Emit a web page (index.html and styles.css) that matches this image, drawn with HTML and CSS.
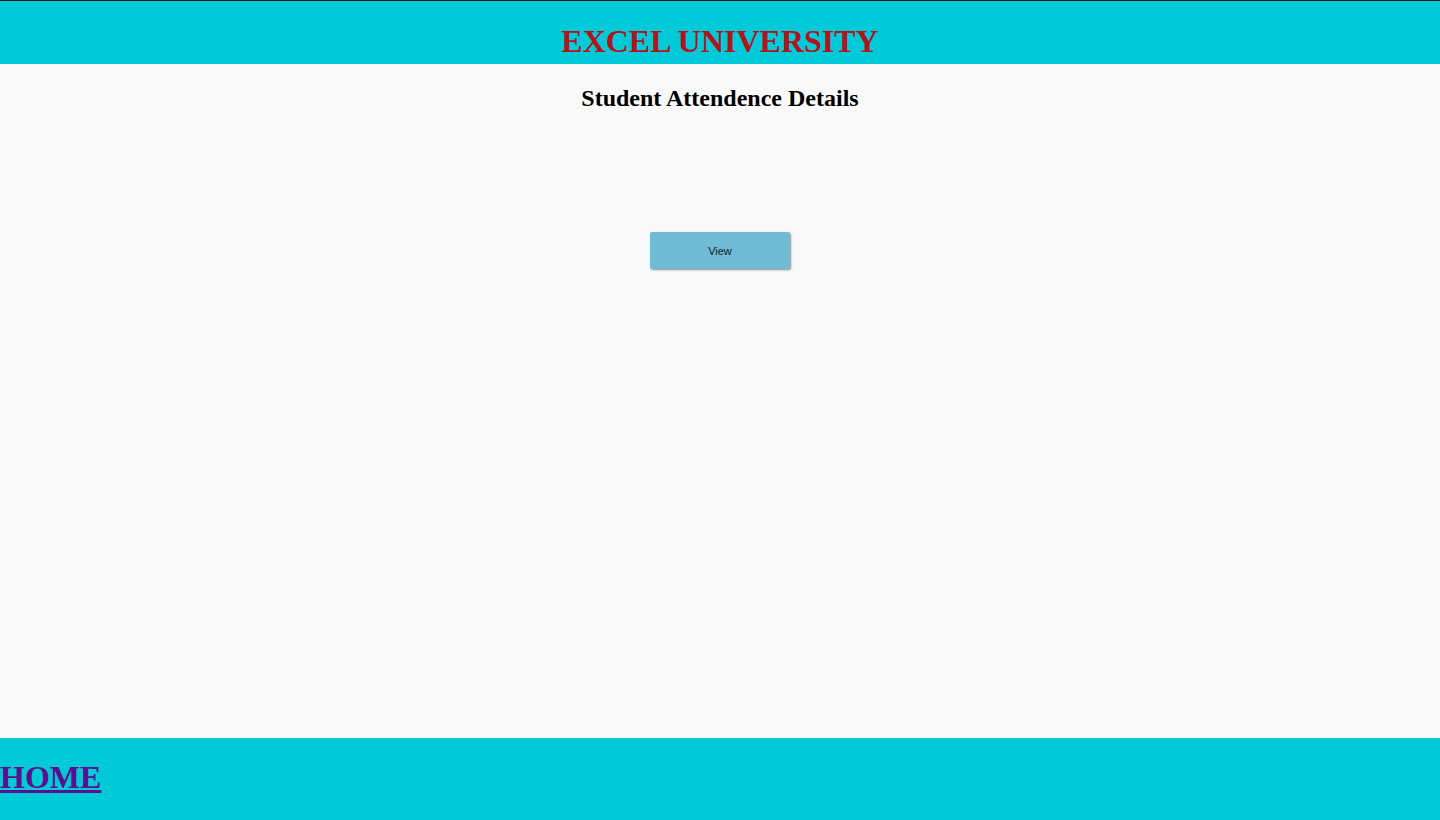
FILE: index.html
```html
<!DOCTYPE html>
<html lang="en">
<head>
<meta charset="utf-8">
<title>Excel University</title>
<link rel="stylesheet" href="styles.css">
</head>
<body>
<div class="page">
  <header class="site-header">
    <h1 class="brand">EXCEL UNIVERSITY</h1>
  </header>
  <main class="content">
    <h2 class="page-title">Student Attendence Details</h2>
    <div class="actions">
      <button class="view-btn" type="button">View</button>
    </div>
  </main>
  <footer class="site-footer">
    <h1 class="home"><a class="home-link" href="#">HOME</a></h1>
  </footer>
</div>
</body>
</html>
```

FILE: styles.css
```css
html, body {
  margin: 0;
  padding: 0;
}
body {
  background: #f9f9f9;
  font-family: "Liberation Serif", "Times New Roman", serif;
}
.page {
  display: flex;
  flex-direction: column;
  min-height: 820px;
}
.site-header {
  background: #00cad8;
  border-top: 1px solid #1a1a1a;
  height: 63px;
}
.brand {
  margin: 0;
  padding-top: 22px;
  text-align: center;
  font-size: 32px;
  font-weight: bold;
  color: #b3141c;
  line-height: normal;
}
.content {
  flex: 1;
}
.page-title {
  margin: 21px 0 0;
  text-align: center;
  font-size: 24px;
  font-weight: bold;
  color: #000;
}
.actions {
  display: flex;
  justify-content: center;
  margin-top: 120px;
}
.view-btn {
  width: 140px;
  height: 37px;
  background: #70bcd4;
  border: none;
  border-radius: 2px;
  box-shadow: 1px 1px 2px #8f8f8f;
  font-family: "Liberation Sans", Arial, sans-serif;
  font-size: 11px;
  color: #111a1f;
  padding: 0;
}
.site-footer {
  background: #00cad8;
  height: 82px;
  box-sizing: border-box;
  padding-top: 21px;
}
.home {
  margin: 0;
  font-size: 32px;
  font-weight: bold;
  line-height: normal;
}
.home-link {
  color: #5b0f8e;
  text-decoration: underline;
}
```
